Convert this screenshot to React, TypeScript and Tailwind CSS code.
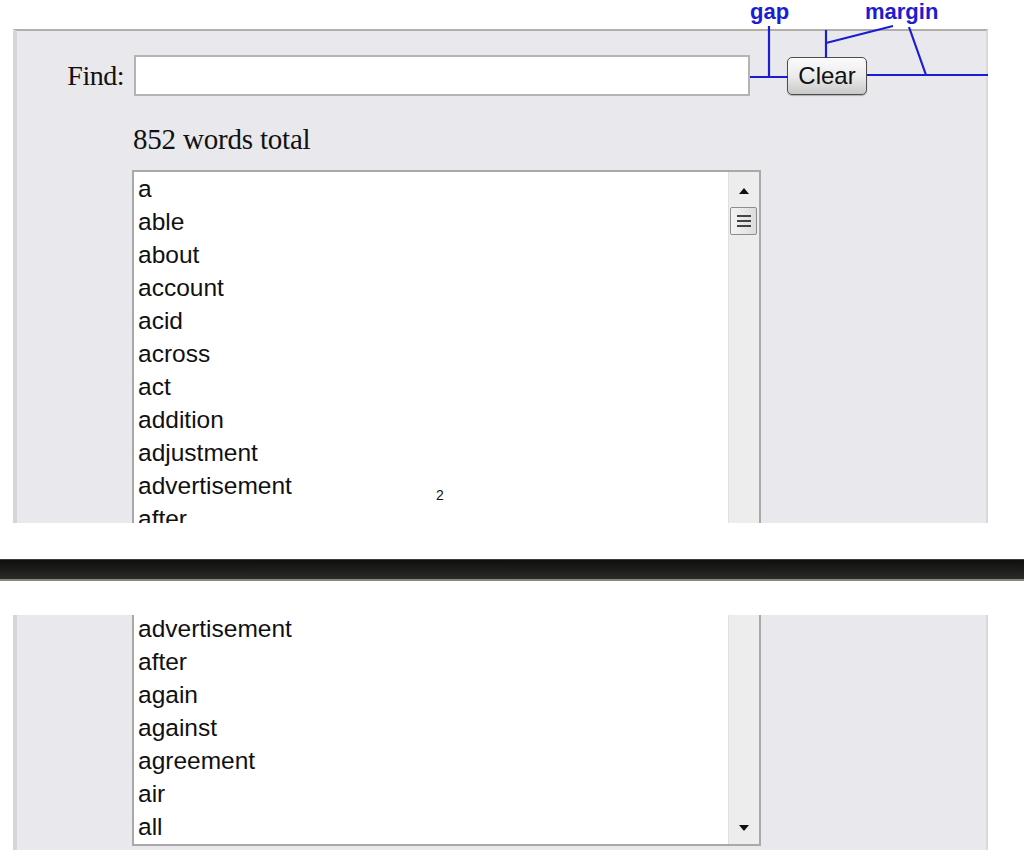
const topWords = ["a", "able", "about", "account", "acid", "across", "act", "addition", "adjustment", "advertisement", "after"];
const bottomWords = ["advertisement", "after", "again", "against", "agreement", "air", "all"];

const serif = { fontFamily: '"Liberation Serif", "Times New Roman", serif' };

function WordRows({ words }: { words: string[] }) {
  return (
    <>
      {words.map((word) => (
        <div key={word} className="h-[33px] pl-[4px] text-[24.5px] leading-[33px] text-[#111] font-['Liberation_Sans',Arial,sans-serif]">
          {word}
        </div>
      ))}
    </>
  );
}

function Thumb() {
  return (
    <div className="ml-[1px] mt-[35px] flex h-[28px] w-[27px] flex-col items-center justify-center gap-[3px] rounded-[2px] border border-[#8c8c8c] bg-gradient-to-r from-[#f4f4f4] to-[#dcdcdc]">
      <div className="h-[2px] w-[14px] bg-[#444]" />
      <div className="h-[2px] w-[14px] bg-[#444]" />
      <div className="h-[2px] w-[14px] bg-[#444]" />
    </div>
  );
}

function Annotations() {
  return (
    <>
      <span className="absolute left-[750px] top-[1px] text-[22px] font-bold leading-[22px] text-[#1c1cd2] font-['Liberation_Sans',Arial,sans-serif]">gap</span>
      <span className="absolute left-[865px] top-[1px] text-[22px] font-bold leading-[22px] text-[#1c1cd2] font-['Liberation_Sans',Arial,sans-serif]">margin</span>
      <svg className="pointer-events-none absolute left-0 top-0" width="1024" height="120" viewBox="0 0 1024 120">
        <g stroke="#1c1cd2" strokeWidth="2.2" fill="none">
          <line x1="769" y1="26" x2="769" y2="77" />
          <line x1="750" y1="77" x2="788" y2="77" />
          <line x1="826" y1="30" x2="826" y2="58" />
          <line x1="826" y1="43" x2="893" y2="26" />
          <line x1="909" y1="27" x2="926" y2="75" />
          <line x1="867" y1="75" x2="988" y2="75" />
        </g>
      </svg>
    </>
  );
}

export default function App() {
  return (
    <div className="relative flex h-[850px] w-[1024px] flex-col overflow-hidden bg-white">
      <div className="ml-[13px] mt-[29px] h-[494px] w-[975px] shrink-0 overflow-hidden border-l-4 border-r-2 border-t-2 border-l-[#d6d6da] border-r-[#dadade] border-t-[#b2aeaa] bg-[#e9e9ed]">
        <div className="mt-[24px] flex items-start">
          <div className="flex h-[41px] w-[117px] items-center justify-end pr-[10px] text-[28px] tracking-[-0.5px] text-[#111]" style={serif}>
            Find:
          </div>
          <div className="h-[41px] w-[616px] border-2 border-[#b4b4b4] bg-white" />
          <button type="button" className="ml-[37px] mt-[2px] flex h-[38px] w-[80px] items-center justify-center rounded-[5px] border-[1.5px] border-[#4d4d4d] bg-gradient-to-b from-[#fbfbfb] via-[#ececec] to-[#c9c9c9] text-[24px] text-[#111] shadow-[0_1px_1px_rgba(0,0,0,0.25)] font-['Liberation_Sans',Arial,sans-serif]">
            Clear
          </button>
        </div>
        <div className="ml-[116px] mt-[27px] text-[29px] leading-[32px] tracking-[-0.2px] text-[#111]" style={serif}>
          852 words total
        </div>
        <div className="ml-[115px] mt-[15px] flex h-[400px] w-[629px] border-2 border-[#a9a9a9] bg-white">
          <div className="flex-1 overflow-hidden">
            <WordRows words={topWords} />
          </div>
          <div className="flex w-[31px] flex-col border-l border-[#e0e0e0] bg-[#ededed]">
            <div className="mx-auto mt-[16px] h-0 w-0 border-x-[5px] border-b-[6px] border-x-transparent border-b-[#111]" />
            <div className="-mt-[22px]">
              <Thumb />
            </div>
          </div>
        </div>
      </div>

      <div className="pointer-events-none absolute left-[436px] top-[486px] text-[14px] leading-[18px] text-[#111] font-['Liberation_Sans',Arial,sans-serif]">2</div>

      <div className="mt-[36px] h-[22px] shrink-0 border-b-2 border-t border-b-[#8a8a82] border-t-[#3c3c3a] bg-gradient-to-b from-[#0f0f0e] to-[#2c2b26]" />

      <div className="ml-[13px] mt-[34px] h-[236px] w-[975px] shrink-0 overflow-hidden border-l-4 border-r-2 border-l-[#d6d6da] border-r-[#dadade] bg-[#e9e9ed]">
        <div className="ml-[115px] flex h-[231px] w-[629px] border-x-2 border-b-2 border-[#a9a9a9] bg-white">
          <div className="-mt-[3px] flex-1 overflow-hidden">
            <WordRows words={bottomWords} />
          </div>
          <div className="flex w-[31px] flex-col justify-end border-l border-[#e0e0e0] bg-[#ededed]">
            <div className="mx-auto mb-[13px] h-0 w-0 border-x-[5px] border-t-[6px] border-x-transparent border-t-[#111]" />
          </div>
        </div>
      </div>

      <Annotations />
    </div>
  );
}
